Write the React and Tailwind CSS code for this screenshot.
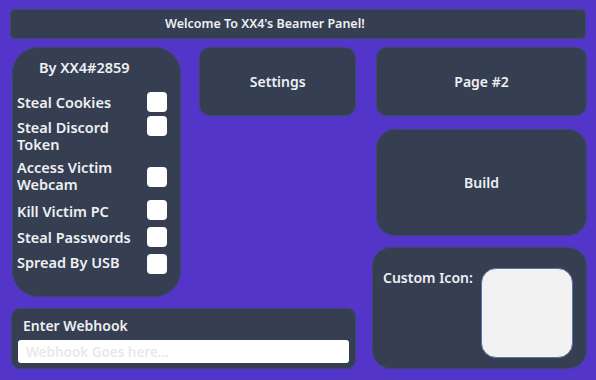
export default function App() {
  const options = [
    { label: "Steal Cookies", mt: "mt-[16px]", textMt: "mt-[2px]", boxMt: "", wrap: false },
    { label: "Steal Discord Token", mt: "mt-[4px]", textMt: "mt-[3px]", boxMt: "", wrap: true },
    { label: "Access Victim Webcam", mt: "mt-[6px]", textMt: "", boxMt: "mt-[8px]", wrap: true },
    { label: "Kill Victim PC", mt: "mt-[7px]", textMt: "mt-[3px]", boxMt: "", wrap: false },
    { label: "Steal Passwords", mt: "mt-[7px]", textMt: "mt-[2px]", boxMt: "", wrap: false },
    { label: "Spread By USB", mt: "mt-[7px]", textMt: "", boxMt: "", wrap: false },
  ];

  const panel = "border border-[#3b4866] bg-[#353f51] text-[#eef0f4]";

  return (
    <div
      className="h-[380px] w-[596px] overflow-hidden bg-[#5336c9] pt-[9px] text-[14px] font-semibold"
      style={{ fontFamily: '"Noto Sans", "DejaVu Sans", sans-serif' }}
    >
      {/* barre du haut */}
      <div className={`mx-[10px] flex h-[30px] items-center rounded-[5px] pl-[154px] text-[12.5px] ${panel}`}>
        Welcome To XX4's Beamer Panel!
      </div>

      <div className="mt-[8px] flex">
        {/* colonne gauche */}
        <div className="ml-[11px] flex w-[345px] flex-col">
          <div className="flex">
            <div className={`ml-[1px] h-[250px] w-[170px] rounded-[26px] px-[4px] pt-[10px] text-[14.5px] ${panel}`}>
              <div className="ml-[22px] leading-[18px]">By XX4#2859</div>
              {options.map((o) => (
                <div key={o.label} className={`flex items-start justify-between ${o.mt}`}>
                  <span
                    className={`${o.textMt} ${o.wrap ? "w-[112px]" : "whitespace-nowrap"} leading-[17px]`}
                  >
                    {o.label}
                  </span>
                  <input
                    type="checkbox"
                    className={`${o.boxMt} mr-[9px] h-[20px] w-[20px] shrink-0 appearance-none rounded-[4px] bg-white`}
                  />
                </div>
              ))}
            </div>
            <button className={`ml-[18px] h-[69px] w-[157px] rounded-[11px] ${panel}`}>
              Settings
            </button>
          </div>

          <div className={`mt-[11px] h-[61px] w-[345px] rounded-[9px] px-[6px] pt-[8px] ${panel}`}>
            <div className="pl-[5px] leading-[18px]">Enter Webhook</div>
            <input
              placeholder="Webhook Goes here..."
              className="mt-[5px] h-[23px] w-[331px] rounded-[3px] bg-white px-[8px] text-[13.5px] font-semibold outline-none placeholder:text-[#ebe8e8]"
            />
          </div>
        </div>

        {/* colonne droite */}
        <div className="ml-[16px] flex w-[215px] flex-col">
          <button className={`ml-[4px] h-[69px] w-[211px] rounded-[11px] ${panel}`}>
            Page #2
          </button>
          <button className={`ml-[4px] mt-[13px] h-[107px] w-[211px] rounded-[19px] ${panel}`}>
            Build
          </button>
          <div className={`mt-[11px] flex h-[122px] w-[215px] justify-between rounded-[19px] pl-[10px] pr-[13px] pt-[20px] ${panel}`}>
            <span className="leading-[20px]">Custom Icon:</span>
            <div className="h-[90px] w-[92px] rounded-[15px] border border-[#5a73a8] bg-[#f2f2f2]" />
          </div>
        </div>
      </div>
    </div>
  );
}
